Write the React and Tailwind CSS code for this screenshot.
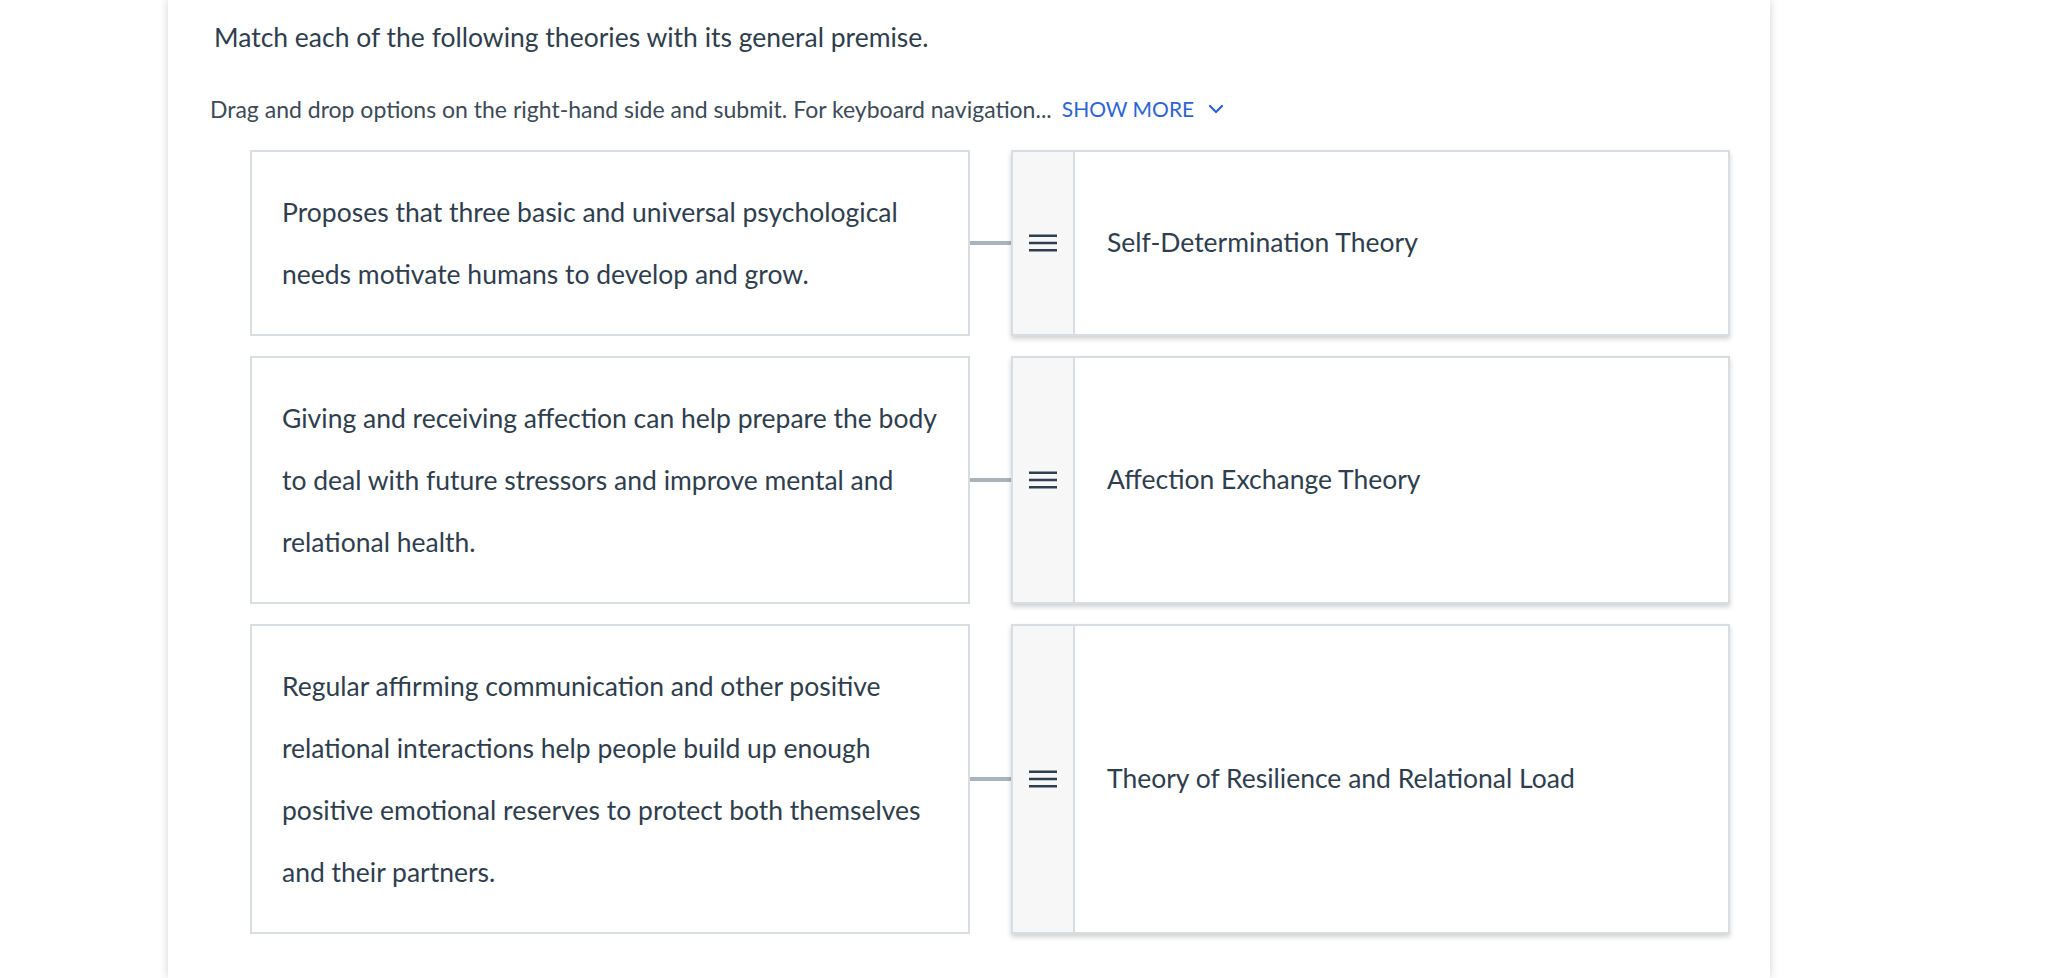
import { ChevronDown } from "lucide-react";

const rows = [
  {
    premise:
      "Proposes that three basic and universal psychological needs motivate humans to develop and grow.",
    theory: "Self-Determination Theory",
  },
  {
    premise:
      "Giving and receiving affection can help prepare the body to deal with future stressors and improve mental and relational health.",
    theory: "Affection Exchange Theory",
  },
  {
    premise:
      "Regular affirming communication and other positive relational interactions help people build up enough positive emotional reserves to protect both themselves and their partners.",
    theory: "Theory of Resilience and Relational Load",
  },
];

function Handle() {
  return (
    <svg width="28" height="20" viewBox="0 0 28 20" className="block">
      <rect x="0" y="1.5" width="28" height="2.5" fill="#2f3e4e" />
      <rect x="0" y="8.75" width="28" height="2.5" fill="#2f3e4e" />
      <rect x="0" y="16" width="28" height="2.5" fill="#2f3e4e" />
    </svg>
  );
}

function MatchRow({ premise, theory }) {
  return (
    <div className="flex items-stretch">
      <div className="w-[720px] border-2 border-[#d9dde2] bg-white px-[30px] py-[29px]">
        <p className="text-[26.5px] leading-[62px] text-[#2f3e4e]">{premise}</p>
      </div>
      <div className="flex w-[41px] items-center">
        <div className="h-[4px] w-full bg-[#a9b3bd]" />
      </div>
      <div className="flex w-[719px] border-2 border-[#d9dde2] bg-white shadow-[0_3px_5px_rgba(0,0,0,0.18)]">
        <div className="flex w-[62px] items-center justify-center border-r-2 border-[#d9dde2] bg-[#f7f7f7]">
          <Handle />
        </div>
        <div className="flex items-center pl-[32px] text-[26.5px] text-[#2f3e4e]">
          {theory}
        </div>
      </div>
    </div>
  );
}

export default function App() {
  return (
    <div
      className="min-h-screen bg-white"
      style={{ fontFamily: "Lato, 'Noto Sans', sans-serif" }}
    >
      <div className="ml-[168px] min-h-screen w-[1602px] bg-white pb-10 shadow-[0_0_9px_rgba(0,0,0,0.18)]">
        <h1 className="pl-[46px] pt-[20px] text-[26.5px] leading-[34px] text-[#2f3e4e]">
          Match each of the following theories with its general premise.
        </h1>

        <div className="mt-[40px] flex items-center pl-[42px] text-[23px] leading-[30px] text-[#3d4a58]">
          <span>
            Drag and drop options on the right-hand side and submit. For keyboard
            navigation...
          </span>
          <button className="ml-[10px] flex items-center gap-[10px] text-[21px] text-[#2d64d2]">
            SHOW MORE
            <ChevronDown size={24} strokeWidth={2.25} />
          </button>
        </div>

        <div className="ml-[82px] mt-[26px] flex flex-col gap-[20px]">
          {rows.map((r) => (
            <MatchRow key={r.theory} premise={r.premise} theory={r.theory} />
          ))}
        </div>
      </div>
    </div>
  );
}
